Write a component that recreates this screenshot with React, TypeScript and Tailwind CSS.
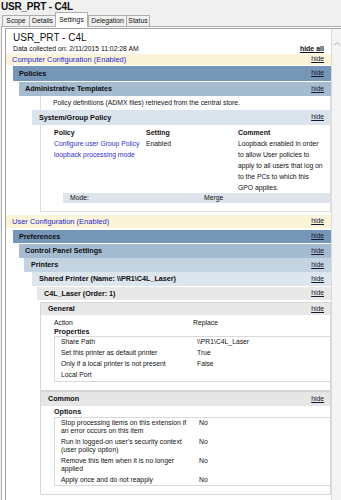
import React from "react";

function Hide() {
  return <span className="underline text-[6.8px] leading-none text-[#161630] font-normal">hide</span>;
}

function Band({ cls, children }: { cls: string; children: React.ReactNode }) {
  return (
    <div className={"flex items-center justify-between " + cls}>
      <span className="font-bold text-[7.2px] leading-none whitespace-nowrap text-[#0c0c0c]">{children}</span>
      <Hide />
    </div>
  );
}

function Tab({ label, w, selected }: { label: string; w: string; selected?: boolean }) {
  if (selected) {
    return (
      <div className={"h-[15px] bg-white border-x border-t border-[#adadad] flex items-center justify-center text-[6.8px] " + w}>
        {label}
      </div>
    );
  }
  return (
    <div className={"h-[11px] mb-[1px] bg-[#f0f0f0] border-l border-t border-[#adadad] flex items-center justify-center text-[6.8px] " + w}>
      {label}
    </div>
  );
}

export default function App() {
  const props: [string, string][] = [
    ["Share Path", "\\\\PR1\\C4L_Laser"],
    ["Set this printer as default printer", "True"],
    ["Only if a local printer is not present", "False"],
    ["Local Port", ""],
  ];
  const opts: [string[], string][] = [
    [["Stop processing items on this extension if", "an error occurs on this item"], "No"],
    [["Run in logged-on user's security context", "(user policy option)"], "No"],
    [["Remove this item when it is no longer", "applied"], "No"],
    [["Apply once and do not reapply"], "No"],
  ];
  return (
    <div className="w-[341px] h-[500px] overflow-hidden bg-[#f0f0f0] font-['Liberation_Sans',Arial,sans-serif] text-[#111]">
      <div className="h-[13px] pl-[1px] text-[10px] font-bold leading-[13px] tracking-[-0.2px]">USR_PRT - C4L</div>
      <div className="relative z-10 flex items-end h-[14px] pl-[2px]">
        <Tab label="Scope" w="w-[27px]" />
        <Tab label="Details" w="w-[26px]" />
        <Tab label="Settings" w="w-[33px]" selected />
        <Tab label="Delegation" w="w-[38px]" />
        <div className="h-[11px] mb-[1px] bg-[#f0f0f0] border-x border-t border-[#adadad] flex items-center justify-center text-[6.8px] w-[24px]">
          Status
        </div>
      </div>
      <div className="-mt-[1px] ml-[1px] w-[360px] h-[480px] border border-[#adadad] bg-white pl-[3px] pt-[1px]">
        <div className="flex h-full border-l border-t border-[#a0a0a0]">
          <div className="w-[325px] shrink-0 bg-white">
            <div className="pl-[7px] pt-[2px] h-[16px] text-[10px] leading-[14px]">USR_PRT - C4L</div>
            <div className="flex items-center justify-between h-[9px] pl-[7px] pr-[7px] text-[6.8px]">
              <span>Data collected on: 2/11/2015 11:02:28 AM</span>
              <span className="font-bold underline text-[7px]">hide all</span>
            </div>
            <div className="flex items-center justify-between h-[11px] bg-[#fbf4d9] pl-[6px] pr-[7px]">
              <span className="text-[7.5px] leading-none text-[#2525cf]">Computer Configuration (Enabled)</span>
              <Hide />
            </div>
            <Band cls="mt-[1px] ml-[7px] h-[15px] pl-[6px] pr-[7px] bg-[#7596b7]">Policies</Band>
            <Band cls="mt-[1px] ml-[13px] h-[14px] pl-[6px] pr-[7px] bg-[#a5bbcf]">Administrative Templates</Band>
            <div className="ml-[34px] h-[14px] border-x border-[#dedede] pl-[12px] flex items-center text-[6.8px] whitespace-nowrap">
              Policy definitions (ADMX files) retrieved from the central store.
            </div>
            <Band cls="ml-[26px] h-[15px] pl-[7px] pr-[7px] bg-[#dbe4ed]">System/Group Policy</Band>
            <div className="ml-[34px] border-x border-b border-[#dedede] pt-[3px] pb-[8px] text-[6.8px]">
              <div className="flex h-[10px] items-center pl-[13px] font-bold text-[7px]">
                <span className="w-[92px]">Policy</span>
                <span className="w-[92px]">Setting</span>
                <span>Comment</span>
              </div>
              <div className="flex pl-[13px] leading-[11px] whitespace-nowrap">
                <div className="w-[92px] text-[#3030cc]">
                  Configure user Group Policy
                  <br />
                  loopback processing mode
                </div>
                <div className="w-[92px]">Enabled</div>
                <div>
                  Loopback enabled in order
                  <br />
                  to allow User policies to
                  <br />
                  apply to all users that log on
                  <br />
                  to the PCs to which this
                  <br />
                  GPO applies.
                </div>
              </div>
              <div className="ml-[22px] h-[10px] bg-[#dde4ec] flex items-center pl-[7px]">
                <span className="w-[134px]">Mode:</span>
                <span>Merge</span>
              </div>
            </div>
            <div className="mt-[3px] flex items-center justify-between h-[13px] bg-[#fbf4d9] pl-[6px] pr-[7px]">
              <span className="text-[7.5px] leading-none text-[#2525cf]">User Configuration (Enabled)</span>
              <Hide />
            </div>
            <Band cls="mt-[2px] ml-[7px] h-[13px] pl-[6px] pr-[7px] bg-[#7596b7]">Preferences</Band>
            <Band cls="mt-[1px] ml-[13px] h-[14px] pl-[6px] pr-[7px] bg-[#a5bbcf]">Control Panel Settings</Band>
            <Band cls="ml-[18px] h-[14px] pl-[7px] pr-[7px] bg-[#c3d3e0]">Printers</Band>
            <Band cls="ml-[26px] h-[14px] pl-[7px] pr-[7px] bg-[#dde5ed]">{"Shared Printer (Name: \\\\PR1\\C4L_Laser)"}</Band>
            <Band cls="mt-[1px] ml-[31px] h-[13px] pl-[7px] pr-[7px] bg-[#e8e8e8]">C4L_Laser (Order: 1)</Band>

            <div className="mt-[2px] ml-[34px] border border-[#d6d6d6] pb-[8px] text-[6.8px]">
              <Band cls="h-[12px] pl-[7px] pr-[6px] bg-[#e8e8e8]">General</Band>
              <div className="pt-[3px] pl-[13px]">
                <div className="flex h-[10px] items-center">
                  <span className="w-[139px]">Action</span>
                  <span>Replace</span>
                </div>
                <div className="h-[8px] flex items-center font-bold text-[7.2px]">Properties</div>
              </div>
              <div className="ml-[13px] border-l border-y border-[#d9d9d9]">
                {props.map(([a, b]) => (
                  <div key={a} className="flex h-[11px] items-center pl-[6px] whitespace-nowrap">
                    <span className="w-[136px]">{a}</span>
                    <span>{b}</span>
                  </div>
                ))}
              </div>
            </div>

            <div className="ml-[34px] border border-[#d6d6d6] pb-[8px] text-[6.8px]">
              <Band cls="h-[14px] pl-[7px] pr-[6px] bg-[#e6e6e6]">Common</Band>
              <div className="pt-[1px] pl-[13px] h-[11px] flex items-center font-bold text-[7.2px]">Options</div>
              <div className="ml-[13px] border-l border-y border-[#d9d9d9]">
                {opts.map(([a, b], i) => (
                  <div
                    key={i}
                    className={
                      a.length > 1
                        ? "flex h-[19px] pt-[1px] pl-[6px] leading-[8px] whitespace-nowrap"
                        : "flex h-[10px] pt-[1px] pl-[6px] leading-[8px] whitespace-nowrap"
                    }
                  >
                    <span className="w-[138px]">
                      {a.map((l, j) => (
                        <div key={j}>{l}</div>
                      ))}
                    </span>
                    <span>{b}</span>
                  </div>
                ))}
              </div>
            </div>
          </div>
          <div className="w-[14px] shrink-0 border-l border-[#dadada] bg-[#f4f4f4]">
            <svg width="8" height="6" viewBox="0 0 8 6" className="mt-[12px] ml-[1px]">
              <path d="M1 4.5 L4 1.5 L7 4.5" stroke="#a8a8a8" strokeWidth="1" fill="none" />
            </svg>
          </div>
        </div>
      </div>
    </div>
  );
}
